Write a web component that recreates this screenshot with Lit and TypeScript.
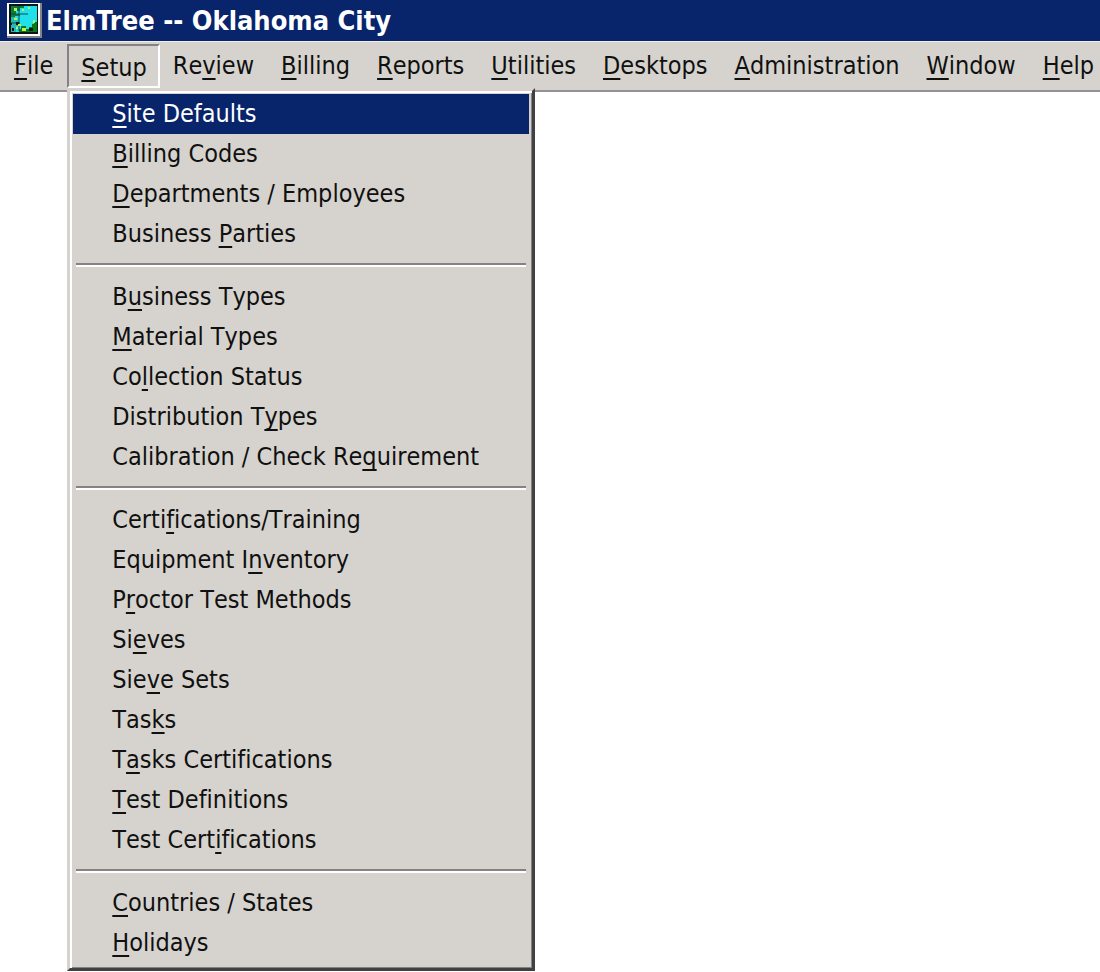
import { LitElement, html, css, svg } from "lit";
import { customElement, state } from "lit/decorators.js";
import { classMap } from "lit/directives/class-map.js";

// An ampersand marks the access key: the letter after it is underlined.
const MENUS = [
  "&File", "&Setup", "Re&view", "&Billing", "&Reports",
  "&Utilities", "&Desktops", "&Administration", "&Window", "&Help",
];

const SETUP_GROUPS = [
  ["&Site Defaults", "&Billing Codes", "&Departments / Employees", "Business &Parties"],
  ["B&usiness Types", "&Material Types", "Co&llection Status", "Distribution T&ypes", "Calibration / Check Re&quirement"],
  [
    "Certi&fications/Training", "Equipment I&nventory", "P&roctor Test Methods", "Si&eves", "Sie&ve Sets",
    "Tas&ks", "T&asks Certifications", "&Test Definitions", "Test Cert&ifications",
  ],
  ["&Countries / States", "&Holidays"],
];

const mnemonic = (label: string) => {
  const at = label.indexOf("&");
  return html`${label.slice(0, at)}<u>${label[at + 1]}</u>${label.slice(at + 2)}`;
};

const appIcon = svg`
  <rect width="35" height="35" fill="#848284"/>
  <rect width="33" height="33" fill="#fff"/>
  <rect x="2" y="1" width="29" height="30" fill="#081818"/>
  <rect x="4" y="3" width="26" height="26" fill="#20e0ec"/>
  <path d="M4 3h13v2h-4v3H9v3h4v2H8v3H4z" fill="#0c7c38"/>
  <path d="M4 14h4v3h3v4h3v2H9v6H4z" fill="#28b8b0"/>
  <path d="M30 19v10H12v-3h2v-3h5v3h3v-2h3v-3h2v-2z" fill="#087818"/>
  <path d="M12 3v25M4 11h17M4 20h9" stroke="#0c4c50" fill="none"/>
  <path d="M2 20h3v2H2zM9 19h3v3H9zM5 25h2v3H5zM22 25h4v3h-4z" fill="#081818"/>
  <path d="M7 5h3v3H7zM15 6h2v2h-2zM21 4h2v2h-2zM7 15h3v2H7zM11 21h3v2h-3zM26 17h2v3h-2zM15 25h4v3h-4zM9 24h2v2H9z" fill="#c0f050"/>
`;

@customElement("app-root")
export class AppRoot extends LitElement {
  @state() private selected = "&Site Defaults";

  static styles = css`
    :host {
      display: block;
      min-height: 100vh;
      background: #fff;
      color: #101010;
      font: 25px/40px "DejaVu Sans Condensed", Tahoma, "DejaVu Sans", sans-serif;
      --face: #d6d3ce;
      --navy: #08246b;
    }
    .titlebar {
      display: flex;
      align-items: center;
      gap: 4px;
      height: 41px;
      padding-left: 7px;
      background: var(--navy);
      color: #fff;
    }
    .title { margin: 0; font-size: 27px; line-height: 40px; white-space: nowrap; }
    .icon { flex: none; width: 35px; height: 35px; }
    .menubar {
      display: flex;
      height: 46px;
      margin: 0;
      padding: 2px 0 0 1px;
      list-style: none;
      background: var(--face);
      border-top: 1px solid #efefef;
      border-bottom: 2px solid #949294;
    }
    .menubar > li { position: relative; height: 44px; }
    button {
      font: inherit;
      font-kerning: none;
      font-variant-ligatures: none;
      color: inherit;
      background: none;
      border: 0;
      margin: 0;
      white-space: nowrap;
      cursor: default;
    }
    .top { height: 44px; padding: 0 12px 0 11px; border: 2px solid transparent; }
    .top.open {
      padding: 2px 11px 0 12px;
      border-color: #848284 #fff #fff #848284;
    }
    u {
      text-decoration: underline;
      text-decoration-thickness: 2px;
      text-underline-offset: 4px;
      text-decoration-skip-ink: none;
    }
    .popup {
      position: absolute;
      z-index: 1;
      top: 100%;
      left: 0;
      padding: 3px 3px 5px;
      background: var(--face);
      border: 3px solid;
      border-color: var(--face) #424142 #424142 var(--face);
      box-shadow: inset 2px 2px #fff, inset -1px -1px #848284;
    }
    .group { margin: 0; padding: 0; list-style: none; }
    .item {
      display: block;
      width: 100%;
      height: 40px;
      padding: 0 50px 0 39px;
      text-align: left;
    }
    .item.selected { background: var(--navy); color: #fff; }
    .rule {
      margin: 9px 3px 10px;
      border: solid;
      border-width: 2px 0;
      border-color: #848284 transparent #fff;
    }
  `;

  render() {
    return html`
      <header class="titlebar">
        <svg class="icon" viewBox="0 0 35 35" aria-hidden="true">${appIcon}</svg>
        <h1 class="title">ElmTree -- Oklahoma City</h1>
      </header>
      <ul class="menubar">
        ${MENUS.map((name) => {
          const open = name === "&Setup";
          return html`<li>
            <button class=${classMap({ top: true, open })} aria-haspopup="true">${mnemonic(name)}</button>
            ${open ? this.renderPopup() : null}
          </li>`;
        })}
      </ul>
    `;
  }

  private renderPopup() {
    return html`<div class="popup">
      ${SETUP_GROUPS.map((group, i) => html`
        ${i ? html`<hr class="rule" />` : null}
        <ul class="group">
          ${group.map((name) => html`<li>
            <button
              class=${classMap({ item: true, selected: name === this.selected })}
              @mouseenter=${() => (this.selected = name)}
            >${mnemonic(name)}</button>
          </li>`)}
        </ul>
      `)}
    </div>`;
  }
}
